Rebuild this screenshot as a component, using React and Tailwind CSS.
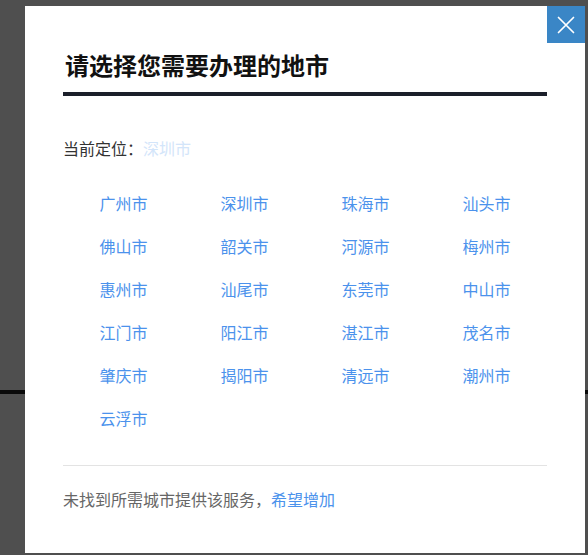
import React from "react";

const cities = [
  "广州市", "深圳市", "珠海市", "汕头市",
  "佛山市", "韶关市", "河源市", "梅州市",
  "惠州市", "汕尾市", "东莞市", "中山市",
  "江门市", "阳江市", "湛江市", "茂名市",
  "肇庆市", "揭阳市", "清远市", "潮州市",
  "云浮市",
];

export default function App() {
  return (
    <div
      className="relative w-[588px] h-[555px] overflow-hidden bg-[#4f4f4f]"
      style={{ fontFamily: '"Microsoft YaHei", "Noto Sans CJK SC", "Noto Sans", sans-serif' }}
    >
      <div className="h-[390px]" />
      <div className="h-[4px] bg-[#0a0a0a]" />

      <div className="absolute left-[25px] top-[6px] w-[560px] h-[547px] bg-white px-[38px] pt-[43px]">
        <button className="absolute right-0 top-0 w-[38px] h-[37px] bg-[#3a86c6] flex items-center justify-center">
          <svg width="18" height="18" viewBox="0 0 18 18" fill="none">
            <path d="M1.5 1.5L16.5 16.5M16.5 1.5L1.5 16.5" stroke="white" strokeWidth="1.7" strokeLinecap="round" />
          </svg>
        </button>

        <h1 className="text-[24px] leading-[32px] font-bold text-[#111] pl-[2px]">
          请选择您需要办理的地市
        </h1>
        <div className="mt-[11px] h-[4px] bg-[#1b1f2a]" />

        <p className="mt-[40px] text-[16px] leading-[24px] text-[#333]">
          当前定位：<span className="text-[#d3e5fa]">深圳市</span>
        </p>

        <div className="mt-[21px] grid grid-cols-4">
          {cities.map((c) => (
            <a
              key={c}
              className="h-[43px] flex items-center justify-center text-[16px] text-[#4b92ec] cursor-pointer"
            >
              {c}
            </a>
          ))}
        </div>

        <div className="mt-[26px] h-px bg-[#e3e3e3]" />

        <p className="mt-[21px] text-[16px] leading-[24px] text-[#666]">
          未找到所需城市提供该服务，<a className="text-[#4b92ec] cursor-pointer">希望增加</a>
        </p>
      </div>
    </div>
  );
}
